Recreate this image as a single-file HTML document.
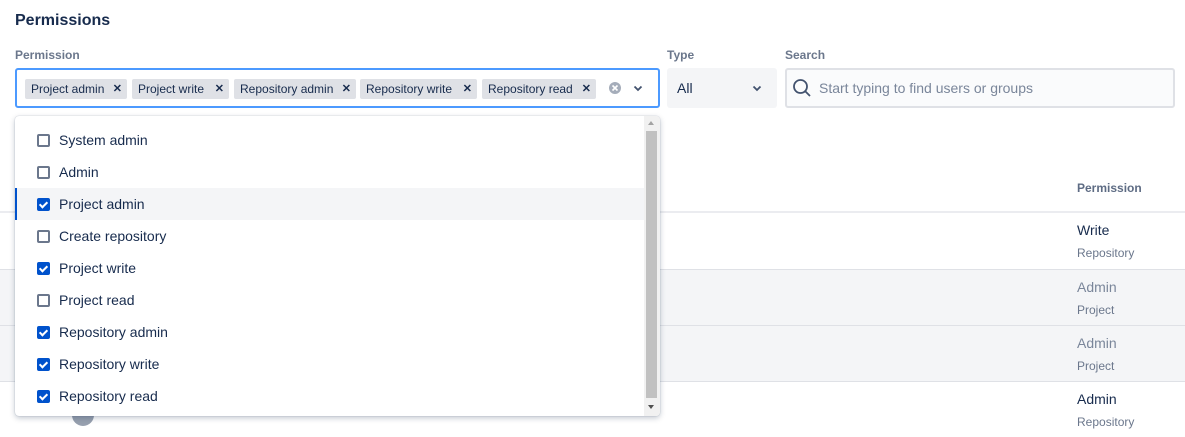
<!DOCTYPE html>
<html><head><style>
*{box-sizing:border-box;margin:0;padding:0}
body{width:1185px;height:436px;overflow:hidden;background:#fff;font-family:"Liberation Sans",sans-serif;color:#172b4d;position:relative}
.abs{position:absolute}
.lbl{font-size:12px;font-weight:bold;color:#6b778c}
.tag{position:absolute;top:79px;height:20px;background:#dfe1e6;border-radius:2px;font-size:12px;line-height:20px;padding-left:6px;color:#172b4d;white-space:nowrap}
.tag b{position:absolute;right:5px;top:0;font-size:11px}
.item{position:absolute;left:0;width:630px;height:32px;font-size:14px;line-height:32px;padding-left:44px}
.cb{position:absolute;left:22px;top:10px;width:13px;height:13px;border:2px solid #6b778c;border-radius:2px;background:#fff}
.cb.on{background:#0052cc;border-color:#0052cc}
.cb.on:after{content:"";position:absolute;left:2px;top:0px;width:3px;height:6px;border:solid #fff;border-width:0 2px 2px 0;transform:rotate(45deg)}
.row{position:absolute;left:0;width:1185px;height:56px;border-top:1px solid #dfe1e6}
.p1{position:absolute;left:1077px;top:9px;font-size:14px}
.p2{position:absolute;left:1077px;top:33px;font-size:12px;color:#6b778c}
</style></head><body>
<div class="abs" style="left:15px;top:12px;font-size:16px;font-weight:bold">Permissions</div>
<div class="abs lbl" style="left:15px;top:48px">Permission</div>
<div class="abs lbl" style="left:667px;top:48px">Type</div>
<div class="abs lbl" style="left:785px;top:48px">Search</div>

<div class="abs" style="left:15px;top:68px;width:645px;height:40px;border:2px solid #4c9aff;border-radius:3px"></div>
<div class="tag" style="left:25px;width:102px">Project admin<b>✕</b></div>
<div class="tag" style="left:132px;width:97px">Project write<b>✕</b></div>
<div class="tag" style="left:234px;width:122px">Repository admin<b>✕</b></div>
<div class="tag" style="left:360px;width:117px">Repository write<b>✕</b></div>
<div class="tag" style="left:482px;width:114px">Repository read<b>✕</b></div>
<svg class="abs" style="left:608px;top:81px" width="14" height="14"><circle cx="7" cy="7" r="6" fill="#a5adba"/><path d="M4.5 4.5l5 5M9.5 4.5l-5 5" stroke="#fff" stroke-width="1.6"/></svg>
<svg class="abs" style="left:632px;top:83px" width="12" height="10"><path d="M2.5 3.5l3.5 3.5 3.5-3.5" stroke="#42526e" stroke-width="1.8" fill="none"/></svg>

<div class="abs" style="left:667px;top:68px;width:110px;height:40px;background:#f4f5f7;border-radius:3px;font-size:14px;line-height:40px;padding-left:10px">All</div>
<svg class="abs" style="left:751px;top:83px" width="12" height="10"><path d="M2.5 3.5l3.5 3.5 3.5-3.5" stroke="#42526e" stroke-width="1.8" fill="none"/></svg>

<div class="abs" style="left:785px;top:68px;width:390px;height:40px;background:#fafbfc;border:2px solid #dfe1e6;border-radius:3px;font-size:14px;line-height:36px;padding-left:32px;color:#7a869a">Start typing to find users or groups</div>
<svg class="abs" style="left:792px;top:78px" width="20" height="20"><circle cx="8.5" cy="8.5" r="6.5" stroke="#42526e" stroke-width="1.8" fill="none"/><path d="M13 13l5 5" stroke="#42526e" stroke-width="1.8"/></svg>

<div class="abs" style="left:1077px;top:181px;font-size:12px;font-weight:bold;color:#5e6c84">Permission</div>
<div class="abs" style="left:0;top:211px;width:1185px;height:2px;background:#ebecf0"></div>
<div class="row" style="top:213px;border-top:0"><div class="p1">Write</div><div class="p2">Repository</div></div>
<div class="row" style="top:269px;background:#f4f5f7"><div class="p1" style="color:#7a869a">Admin</div><div class="p2">Project</div></div>
<div class="row" style="top:325px;background:#f4f5f7"><div class="p1" style="color:#7a869a">Admin</div><div class="p2">Project</div></div>
<div class="row" style="top:381px"><div class="p1">Admin</div><div class="p2">Repository</div></div>
<div class="abs" style="left:72px;top:404px;width:22px;height:22px;border-radius:50%;background:#97a0af"></div>

<div class="abs" style="left:15px;top:116px;width:645px;height:300px;background:#fff;border-radius:4px;box-shadow:0 2px 6px rgba(9,30,66,.25),0 0 1px rgba(9,30,66,.31);overflow:hidden">
 <div class="item" style="top:8px"><span class="cb"></span>System admin</div>
 <div class="item" style="top:40px"><span class="cb"></span>Admin</div>
 <div class="item" style="top:72px;background:#f4f5f7;border-left:2px solid #0052cc;padding-left:42px"><span class="cb on" style="left:20px"></span>Project admin</div>
 <div class="item" style="top:104px"><span class="cb"></span>Create repository</div>
 <div class="item" style="top:136px"><span class="cb on"></span>Project write</div>
 <div class="item" style="top:168px"><span class="cb"></span>Project read</div>
 <div class="item" style="top:200px"><span class="cb on"></span>Repository admin</div>
 <div class="item" style="top:232px"><span class="cb on"></span>Repository write</div>
 <div class="item" style="top:264px"><span class="cb on"></span>Repository read</div>
 <div class="abs" style="left:629px;top:0;width:16px;height:300px;background:#f1f1f1"></div>
 <div class="abs" style="left:631px;top:15px;width:11px;height:267px;background:#c1c1c1"></div>
 <div class="abs" style="left:633px;top:5px;width:0;height:0;border:3.5px solid transparent;border-bottom:4px solid #a3a3a3;border-top:0"></div>
 <div class="abs" style="left:633px;top:289px;width:0;height:0;border:3.5px solid transparent;border-top:4px solid #505050;border-bottom:0"></div>
</div>
</body></html>
